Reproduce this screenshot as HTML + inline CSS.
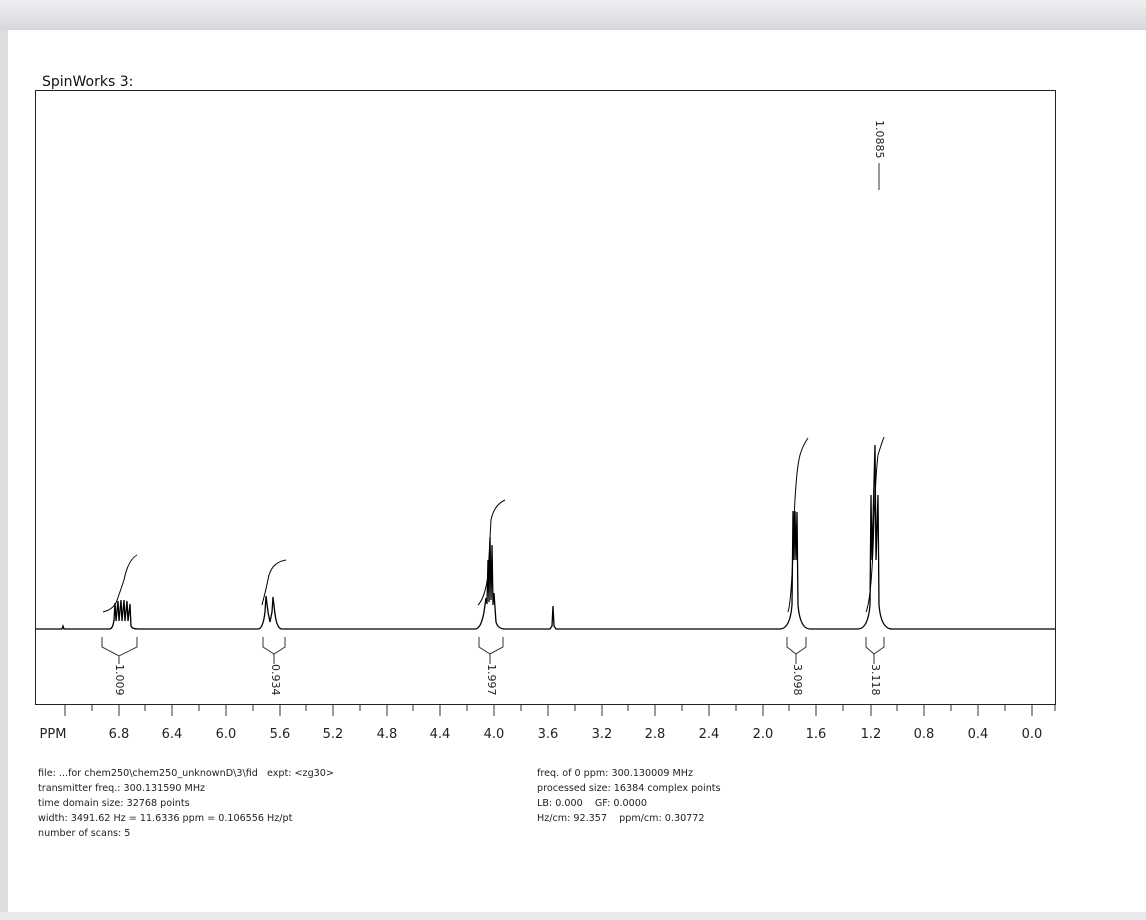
<!DOCTYPE html>
<html><head><meta charset="utf-8"><style>
html,body{margin:0;padding:0;width:1146px;height:920px;overflow:hidden;background:#eff0f2;}
svg{display:block;font-family:"DejaVu Sans","Liberation Sans",sans-serif;}
text{white-space:pre;}
</style></head><body>
<svg width="1146" height="920" viewBox="0 0 1146 920">
<defs><linearGradient id="g" x1="0" y1="0" x2="0" y2="1"><stop offset="0" stop-color="#eff0f2"/><stop offset="1" stop-color="#d6d7da"/></linearGradient></defs>
<rect x="0" y="0" width="1146" height="30" fill="url(#g)"/>
<rect x="0" y="30" width="8" height="890" fill="#dcdde0"/>
<rect x="8" y="30" width="1138" height="882" fill="#fff"/>
<rect x="0" y="912" width="1146" height="8" fill="#e8e9eb"/>
<text x="42" y="86" font-size="14" fill="#111">SpinWorks 3:</text>
<rect x="35.5" y="90.5" width="1020" height="614" fill="none" stroke="#222" stroke-width="1"/>
<g stroke="#333" stroke-width="1">
<line x1="65" y1="705" x2="65" y2="716"/><line x1="92" y1="705" x2="92" y2="711"/>
<line x1="119" y1="705" x2="119" y2="716"/><line x1="145" y1="705" x2="145" y2="711"/>
<line x1="172" y1="705" x2="172" y2="716"/><line x1="199" y1="705" x2="199" y2="711"/>
<line x1="226" y1="705" x2="226" y2="716"/><line x1="253" y1="705" x2="253" y2="711"/>
<line x1="280" y1="705" x2="280" y2="716"/><line x1="306" y1="705" x2="306" y2="711"/>
<line x1="333" y1="705" x2="333" y2="716"/><line x1="360" y1="705" x2="360" y2="711"/>
<line x1="387" y1="705" x2="387" y2="716"/><line x1="413" y1="705" x2="413" y2="711"/>
<line x1="440" y1="705" x2="440" y2="716"/><line x1="467" y1="705" x2="467" y2="711"/>
<line x1="494" y1="705" x2="494" y2="716"/><line x1="521" y1="705" x2="521" y2="711"/>
<line x1="548" y1="705" x2="548" y2="716"/><line x1="575" y1="705" x2="575" y2="711"/>
<line x1="602" y1="705" x2="602" y2="716"/><line x1="628" y1="705" x2="628" y2="711"/>
<line x1="655" y1="705" x2="655" y2="716"/><line x1="682" y1="705" x2="682" y2="711"/>
<line x1="709" y1="705" x2="709" y2="716"/><line x1="736" y1="705" x2="736" y2="711"/>
<line x1="763" y1="705" x2="763" y2="716"/><line x1="789" y1="705" x2="789" y2="711"/>
<line x1="816" y1="705" x2="816" y2="716"/><line x1="843" y1="705" x2="843" y2="711"/>
<line x1="871" y1="705" x2="871" y2="716"/><line x1="897" y1="705" x2="897" y2="711"/>
<line x1="924" y1="705" x2="924" y2="716"/><line x1="951" y1="705" x2="951" y2="711"/>
<line x1="978" y1="705" x2="978" y2="716"/><line x1="1005" y1="705" x2="1005" y2="711"/>
<line x1="1032" y1="705" x2="1032" y2="716"/><line x1="1055" y1="705" x2="1055" y2="711"/>
</g>
<g font-size="13" fill="#222" text-anchor="middle">
<text x="53" y="738">PPM</text>
<text x="119" y="738">6.8</text><text x="172" y="738">6.4</text><text x="226" y="738">6.0</text>
<text x="280" y="738">5.6</text><text x="333" y="738">5.2</text><text x="387" y="738">4.8</text>
<text x="440" y="738">4.4</text><text x="494" y="738">4.0</text><text x="548" y="738">3.6</text>
<text x="602" y="738">3.2</text><text x="655" y="738">2.8</text><text x="709" y="738">2.4</text>
<text x="763" y="738">2.0</text><text x="816" y="738">1.6</text><text x="871" y="738">1.2</text>
<text x="924" y="738">0.8</text><text x="978" y="738">0.4</text><text x="1032" y="738">0.0</text>
</g>
<g fill="none" stroke="#000" stroke-width="1.3">
<path d="M36 629 L62 629 L63 626 L64 629 L110 629 Q113 628 114 620 L115 603 L116 621 L118 601 L119 621 L121 600 L122 621 L124 600 L125 621 L127 601 L128 621 L130 604 L131 626 Q132 629 138 629 L258 629 Q263 629 265 612 L266 596 L268 612 L270 622 L272 612 L273 597 L275 614 Q277 629 282 629 L475 629 Q481 629 484 612 L486 598 L487 604 L488 560 L489 602 L490 537 L491 600 L492 545 L493 605 L494 593 L496 622 Q498 629 505 629 L550 629 L552 626 L553 606 L554 626 L556 629 L780 629 Q790 629 792 605 L793 511 L794 560 L795 511 L796 560 L797 512 L798 605 Q800 629 810 629 L858 629 Q868 629 870 605 L871 495 L872 560 L875 445 L876 560 L878 495 L879 605 Q881 629 892 629 L1055 629"/>
</g>
<g fill="none" stroke="#000" stroke-width="1">
<path d="M103 612 Q112 610 116 603 Q120 592 124 580 Q128 560 137 555"/>
<path d="M262 605 Q266 590 269 575 Q273 562 286 560"/>
<path d="M478 605 Q485 598 488 575 L491 520 Q494 505 505 500"/>
<path d="M788 612 Q792 600 794 520 Q796 470 800 455 Q803 445 808 438"/>
<path d="M866 612 Q872 598 874 520 Q876 470 878 455 Q881 445 884 437"/>
</g>
<g fill="none" stroke="#333" stroke-width="1">
<path d="M102 637 V647 L119 656 L137 647 V637 M119 656 V664"/>
<path d="M263 637 V647 L274 654 L285 647 V637 M274 654 V664"/>
<path d="M479 637 V647 L490 654 L503 647 V637 M490 654 V664"/>
<path d="M787 637 V647 L796 654 L806 647 V637 M796 654 V664"/>
<path d="M866 637 V647 L874 654 L884 647 V637 M874 654 V664"/>
<line x1="879" y1="163" x2="879" y2="190"/>
</g>
<g font-size="11" fill="#222">
<text transform="translate(116,664) rotate(90)">1.009</text>
<text transform="translate(272,664) rotate(90)">0.934</text>
<text transform="translate(488,664) rotate(90)">1.997</text>
<text transform="translate(794,664) rotate(90)">3.098</text>
<text transform="translate(872,664) rotate(90)">3.118</text>
<text transform="translate(876,120) rotate(90)">1.0885</text>
</g>
<g font-size="9.6" fill="#222">
<text x="38" y="776">file: ...for chem250\chem250_unknownD\3\fid   expt: &lt;zg30&gt;</text>
<text x="38" y="791">transmitter freq.: 300.131590 MHz</text>
<text x="38" y="806">time domain size: 32768 points</text>
<text x="38" y="821">width: 3491.62 Hz = 11.6336 ppm = 0.106556 Hz/pt</text>
<text x="38" y="836">number of scans: 5</text>
<text x="537" y="776">freq. of 0 ppm: 300.130009 MHz</text>
<text x="537" y="791">processed size: 16384 complex points</text>
<text x="537" y="806">LB: 0.000    GF: 0.0000</text>
<text x="537" y="821">Hz/cm: 92.357    ppm/cm: 0.30772</text>
</g>
</svg>
</body></html>
